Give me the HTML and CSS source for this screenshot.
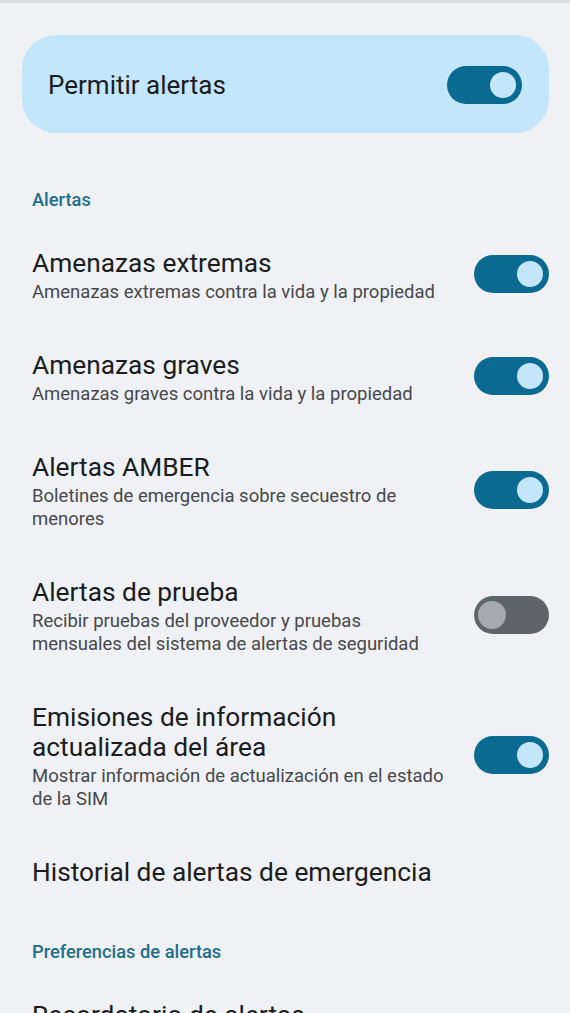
FILE: index.html
```html
<!DOCTYPE html>
<html lang="es">
<head>
    <meta charset="UTF-8">
    <meta name="viewport" content="width=device-width, initial-scale=1.0">
    <link rel="stylesheet" href="styles.css">
    <title>Alertas de emergencia inalámbricas</title>
</head>
<body>
    <div class="topEdge"></div>

    <div class="page">
        <div class="mainCard">
            <span class="mainLabel">Permitir alertas</span>
            <div class="switch on"><span class="thumb"></span></div>
        </div>

        <div class="sectionTitle">Alertas</div>

        <div class="row">
            <div class="text">
                <div class="title">Amenazas extremas</div>
                <div class="summary">Amenazas extremas contra la vida y la propiedad</div>
            </div>
            <div class="switch on"><span class="thumb"></span></div>
        </div>

        <div class="row">
            <div class="text">
                <div class="title">Amenazas graves</div>
                <div class="summary">Amenazas graves contra la vida y la propiedad</div>
            </div>
            <div class="switch on"><span class="thumb"></span></div>
        </div>

        <div class="row">
            <div class="text">
                <div class="title">Alertas AMBER</div>
                <div class="summary">Boletines de emergencia sobre secuestro de menores</div>
            </div>
            <div class="switch on"><span class="thumb"></span></div>
        </div>

        <div class="row">
            <div class="text">
                <div class="title">Alertas de prueba</div>
                <div class="summary">Recibir pruebas del proveedor y pruebas mensuales del sistema de alertas de seguridad</div>
            </div>
            <div class="switch off"><span class="thumb"></span></div>
        </div>

        <div class="row">
            <div class="text">
                <div class="title">Emisiones de información actualizada del área</div>
                <div class="summary">Mostrar información de actualización en el estado de la SIM</div>
            </div>
            <div class="switch on"><span class="thumb"></span></div>
        </div>

        <div class="row">
            <div class="text">
                <div class="title">Historial de alertas de emergencia</div>
            </div>
        </div>

        <div class="sectionTitle later">Preferencias de alertas</div>

        <div class="row">
            <div class="text">
                <div class="title">Recordatorio de alertas</div>
            </div>
        </div>
    </div>
</body>
</html>
```

FILE: styles.css
```css
body{
    margin: 0;
    background-color: #eff1f4;
    font-family: Roboto, "Noto Sans", sans-serif;
    color: #1b1c1e;
    height: 1013px;
    overflow: hidden;
}

.topEdge{
    height: 3px;
    background-color: #dcdee1;
}

.page{
    padding: 32px 21px 0 22px;
}

.mainCard{
    display: flex;
    justify-content: space-between;
    align-items: center;
    height: 98px;
    box-sizing: border-box;
    padding: 2px 27px 0 26px;
    background-color: #c4e6fb;
    border-radius: 34px;
}

.mainLabel{
    font-size: 26px;
    line-height: 30px;
}

.sectionTitle{
    padding: 55px 0 13px 10px;
    font-size: 18.3px;
    line-height: 24px;
    font-weight: 500;
    color: #1d6f8a;
}

.sectionTitle.later{
    padding-top: 30px;
}

.row{
    display: flex;
    align-items: center;
    padding: 23px 0 23px 10px;
}

.row .switch{
    margin-bottom: 4px;
}

.text{
    flex: 1;
    padding-right: 24px;
}

.title{
    font-size: 26.3px;
    line-height: 30px;
}

.summary{
    margin-top: 3px;
    font-size: 18.5px;
    line-height: 23px;
    color: #46484b;
}

/* switches */
.switch{
    width: 75px;
    height: 38px;
    border-radius: 19px;
    box-sizing: border-box;
    display: flex;
    align-items: center;
    flex-shrink: 0;
}

.switch.on{
    background-color: #0b6a92;
    justify-content: flex-end;
    padding-right: 6px;
}

.switch.off{
    background-color: #5e6568;
    justify-content: flex-start;
    padding-left: 4px;
}

.thumb{
    width: 26px;
    height: 26px;
    border-radius: 50%;
}

.switch.on .thumb{
    background-color: #c4e6fb;
}

.switch.off .thumb{
    width: 28px;
    height: 28px;
    background-color: #a4aaad;
}
```
